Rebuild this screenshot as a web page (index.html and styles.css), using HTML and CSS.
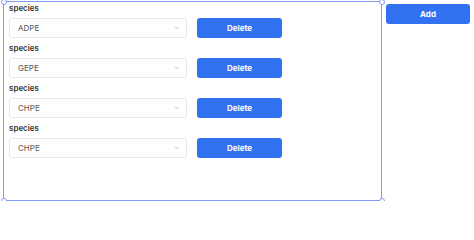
FILE: index.html
```html
<!DOCTYPE html>
<html>
<head>
<meta charset="utf-8">
<link rel="stylesheet" href="styles.css">
</head>
<body>
<div class="page">
  <div class="frame">
    <div class="row">
      <div class="label">species</div>
      <div class="controls">
        <div class="select"><span>ADPE</span><svg class="chev" width="6" height="4" viewBox="0 0 6 4"><path d="M0.8 0.8 L3 2.8 L5.2 0.8" fill="none" stroke="#c2c2c2" stroke-width="0.8"/></svg></div>
        <button class="btn del">Delete</button>
      </div>
    </div>
    <div class="row">
      <div class="label">species</div>
      <div class="controls">
        <div class="select"><span>GEPE</span><svg class="chev" width="6" height="4" viewBox="0 0 6 4"><path d="M0.8 0.8 L3 2.8 L5.2 0.8" fill="none" stroke="#c2c2c2" stroke-width="0.8"/></svg></div>
        <button class="btn del">Delete</button>
      </div>
    </div>
    <div class="row">
      <div class="label">species</div>
      <div class="controls">
        <div class="select"><span>CHPE</span><svg class="chev" width="6" height="4" viewBox="0 0 6 4"><path d="M0.8 0.8 L3 2.8 L5.2 0.8" fill="none" stroke="#c2c2c2" stroke-width="0.8"/></svg></div>
        <button class="btn del">Delete</button>
      </div>
    </div>
    <div class="row">
      <div class="label">species</div>
      <div class="controls">
        <div class="select"><span>CHPE</span><svg class="chev" width="6" height="4" viewBox="0 0 6 4"><path d="M0.8 0.8 L3 2.8 L5.2 0.8" fill="none" stroke="#c2c2c2" stroke-width="0.8"/></svg></div>
        <button class="btn del">Delete</button>
      </div>
    </div>
    <span class="handle tl"></span>
    <span class="handle tr"></span>
    <span class="handle bl"></span>
    <span class="handle br"></span>
  </div>
  <button class="btn add">Add</button>
</div>
</body>
</html>
```
FILE: styles.css
```css
html, body {
  margin: 0;
  padding: 0;
  background: #ffffff;
  font-family: Inter, "Noto Sans", sans-serif;
}
.page {
  display: flex;
  align-items: flex-start;
  gap: 4px;
  padding: 1px 0 0 3px;
}
.frame {
  position: relative;
  box-sizing: border-box;
  width: 379px;
  height: 200px;
  border: 1px solid #819df3;
  padding: 0 0 0 5px;
  display: flex;
  flex-direction: column;
  gap: 4px;
}
.row {
  display: flex;
  flex-direction: column;
}
.label {
  height: 12px;
  line-height: 12px;
  margin-bottom: 4px;
  font-size: 8px;
  font-weight: 600;
  color: #333333;
}
.controls {
  display: flex;
  align-items: center;
  gap: 10px;
}
.select {
  box-sizing: border-box;
  width: 178px;
  height: 20px;
  border: 1px solid #e8e8e8;
  border-radius: 3px;
  display: flex;
  align-items: center;
  justify-content: space-between;
  padding: 0 6px 0 8px;
  font-size: 8px;
  color: #555555;
}
.chev {
  display: block;
}
.btn {
  border: none;
  border-radius: 3px;
  background: #3371f3;
  color: #ffffff;
  font-family: Inter, "Noto Sans", sans-serif;
  font-weight: 700;
  font-size: 8px;
  height: 20px;
  padding: 0;
  cursor: pointer;
}
.del {
  width: 85px;
}
.add {
  width: 84px;
  margin-top: 3px;
}
.handle {
  position: absolute;
  width: 6px;
  height: 6px;
  box-sizing: border-box;
  border: 1px solid #819df3;
  border-radius: 50%;
  background: #ffffff;
}
.tl { left: -3.5px; top: -3.5px; }
.tr { right: -3.5px; top: -3.5px; }
.bl { left: -3.5px; bottom: -3.5px; }
.br { right: -3.5px; bottom: -3.5px; }
```
